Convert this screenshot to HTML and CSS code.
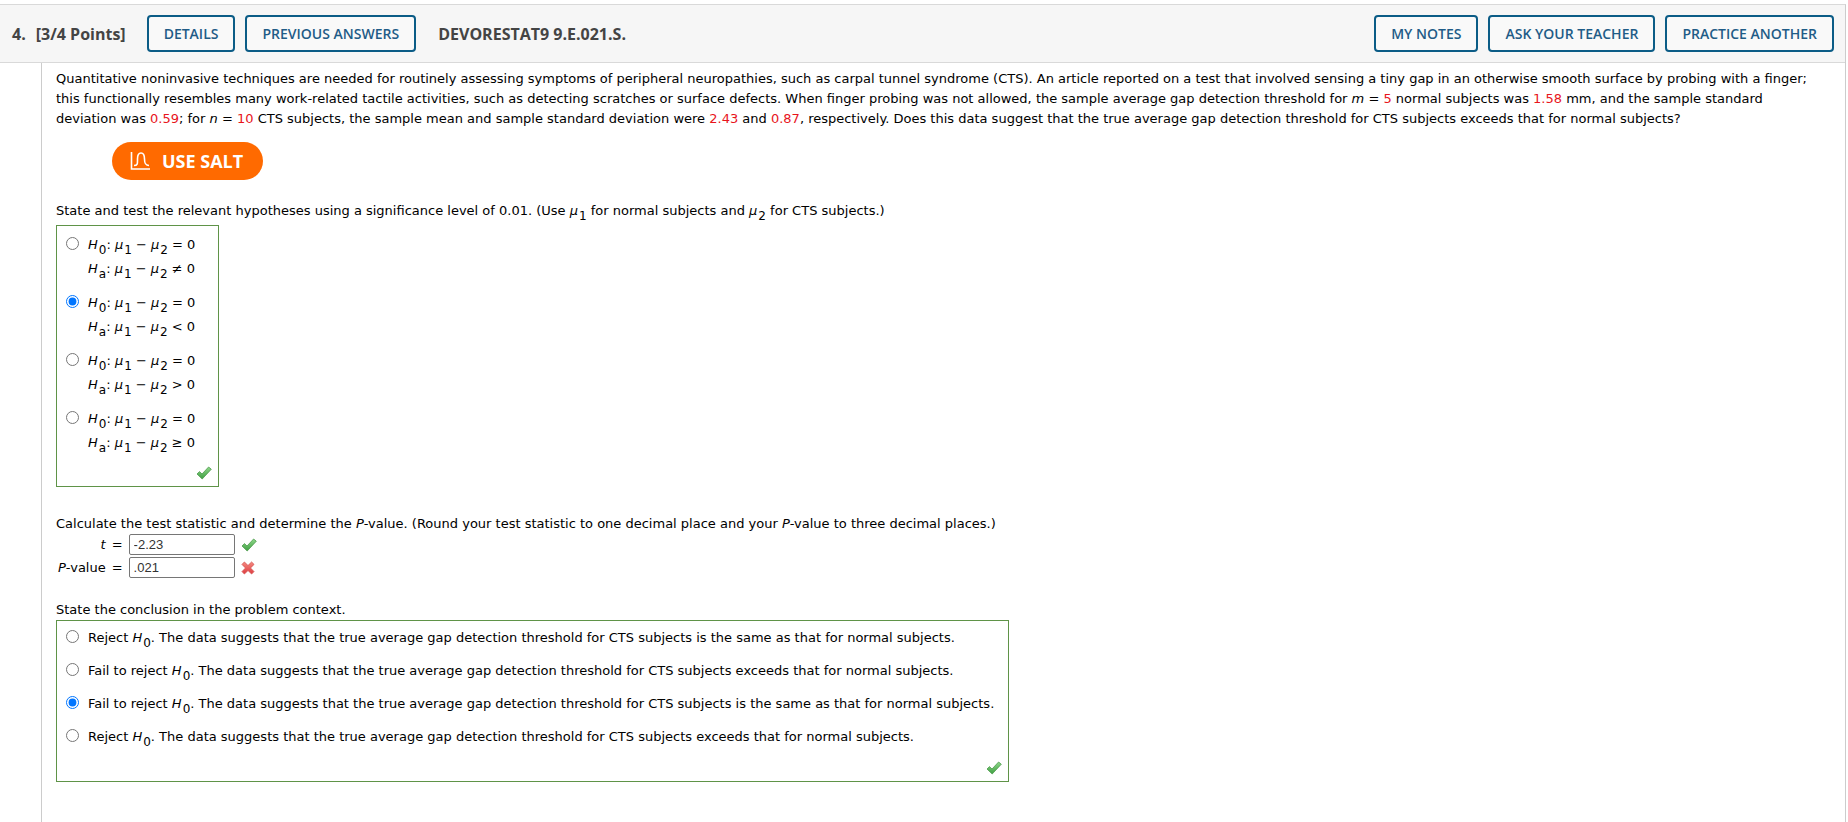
FILE: index.html
```html
<!DOCTYPE html>
<html lang="en">
<head>
  <meta charset="UTF-8">
  <meta name="viewport" content="width=device-width, initial-scale=1.0">
  <title>DEVORESTAT9 9.E.021.S.</title>
  <link rel="stylesheet" href="styles.css">
</head>
<body>
  <!-- shared icons -->
  <svg class="defs" aria-hidden="true">
    <defs>
      <linearGradient id="green" x1="0" y1="0" x2="0" y2="1">
        <stop offset="0" stop-color="#8fd88a"/>
        <stop offset="1" stop-color="#3f9f42"/>
      </linearGradient>
      <linearGradient id="red" x1="0" y1="0" x2="0" y2="1">
        <stop offset="0" stop-color="#f58a80"/>
        <stop offset="1" stop-color="#dd3b40"/>
      </linearGradient>
      <symbol id="check" viewBox="0 0 16 14">
        <path d="M1 8 L3.5 5.6 L6 8 L12.6 1 L15.3 3.2 L6.2 13 Z" fill="url(#green)" stroke="#4c9a4b" stroke-width="0.8" stroke-linejoin="round"/>
      </symbol>
      <symbol id="cross" viewBox="0 0 14 14">
        <path d="M3.4 1 L7 4.5 L10.6 1 L13 3.4 L9.5 7 L13 10.6 L10.6 13 L7 9.5 L3.4 13 L1 10.6 L4.5 7 L1 3.4 Z" fill="url(#red)" stroke="#d4504e" stroke-width="0.8" stroke-linejoin="round"/>
      </symbol>
    </defs>
  </svg>

  <div class="question">
    <header class="header">
      <span class="number">4.</span>
      <span class="points">[3/4 Points]</span>
      <button type="button" class="btn">DETAILS</button>
      <button type="button" class="btn">PREVIOUS ANSWERS</button>
      <h1>DEVORESTAT9 9.E.021.S.</h1>
      <div class="actions">
        <button type="button" class="btn">MY NOTES</button>
        <button type="button" class="btn">ASK YOUR TEACHER</button>
        <button type="button" class="btn">PRACTICE ANOTHER</button>
      </div>
    </header>

    <main class="content">
      <p>Quantitative noninvasive techniques are needed for routinely assessing symptoms of peripheral neuropathies, such as carpal tunnel syndrome (CTS). An article reported on a test that involved sensing a tiny gap in an otherwise smooth surface by probing with a finger; this functionally resembles many work-related tactile activities, such as detecting scratches or surface defects. When finger probing was not allowed, the sample average gap detection threshold for <i>m</i> = <span class="val">5</span> normal subjects was <span class="val">1.58</span> mm, and the sample standard deviation was <span class="val">0.59</span>; for <i>n</i> = <span class="val">10</span> CTS subjects, the sample mean and sample standard deviation were <span class="val">2.43</span> and <span class="val">0.87</span>, respectively. Does this data suggest that the true average gap detection threshold for CTS subjects exceeds that for normal subjects?</p>

      <button type="button" class="salt">
        <svg width="20" height="20" viewBox="0 0 20 20" fill="none" stroke="#fff" stroke-width="1.6" aria-hidden="true">
          <path d="M1.5 1 V18 H20"/>
          <path d="M4 14.5 C8 14.5 7.5 12 7.5 8 C7.5 4 8.5 2 11 2 S14.5 4 14.5 8 C14.5 12 15 14.5 19 14.5"/>
        </svg>
        USE SALT
      </button>

      <p>State and test the relevant hypotheses using a significance level of 0.01. (Use <i>μ</i><sub>1</sub> for normal subjects and <i>μ</i><sub>2</sub> for CTS subjects.)</p>
      <div class="choices hypotheses">
        <label class="choice">
          <input type="radio" name="hyp">
          <span><i>H</i><sub>0</sub>: <i>μ</i><sub>1</sub> − <i>μ</i><sub>2</sub> = 0<br><i>H</i><sub>a</sub>: <i>μ</i><sub>1</sub> − <i>μ</i><sub>2</sub> ≠ 0</span>
        </label>
        <label class="choice">
          <input type="radio" name="hyp" checked>
          <span><i>H</i><sub>0</sub>: <i>μ</i><sub>1</sub> − <i>μ</i><sub>2</sub> = 0<br><i>H</i><sub>a</sub>: <i>μ</i><sub>1</sub> − <i>μ</i><sub>2</sub> &lt; 0</span>
        </label>
        <label class="choice">
          <input type="radio" name="hyp">
          <span><i>H</i><sub>0</sub>: <i>μ</i><sub>1</sub> − <i>μ</i><sub>2</sub> = 0<br><i>H</i><sub>a</sub>: <i>μ</i><sub>1</sub> − <i>μ</i><sub>2</sub> &gt; 0</span>
        </label>
        <label class="choice">
          <input type="radio" name="hyp">
          <span><i>H</i><sub>0</sub>: <i>μ</i><sub>1</sub> − <i>μ</i><sub>2</sub> = 0<br><i>H</i><sub>a</sub>: <i>μ</i><sub>1</sub> − <i>μ</i><sub>2</sub> ≥ 0</span>
        </label>
        <svg class="mark" width="16" height="14" role="img" aria-label="Correct"><use href="#check"/></svg>
      </div>

      <p>Calculate the test statistic and determine the <i>P</i>-value. (Round your test statistic to one decimal place and your <i>P</i>-value to three decimal places.)</p>
      <div class="answers">
        <label for="t"><i>t</i></label>
        <span>=</span>
        <input type="text" id="t" value="-2.23">
        <svg width="16" height="14" role="img" aria-label="Correct"><use href="#check"/></svg>
        <label for="p"><i>P</i>-value</label>
        <span>=</span>
        <input type="text" id="p" value=".021">
        <svg width="14" height="14" role="img" aria-label="Incorrect"><use href="#cross"/></svg>
      </div>

      <p>State the conclusion in the problem context.</p>
      <div class="choices conclusion">
        <label class="choice">
          <input type="radio" name="conc">
          <span>Reject <i>H</i><sub>0</sub>. The data suggests that the true average gap detection threshold for CTS subjects is the same as that for normal subjects.</span>
        </label>
        <label class="choice">
          <input type="radio" name="conc">
          <span>Fail to reject <i>H</i><sub>0</sub>. The data suggests that the true average gap detection threshold for CTS subjects exceeds that for normal subjects.</span>
        </label>
        <label class="choice">
          <input type="radio" name="conc" checked>
          <span>Fail to reject <i>H</i><sub>0</sub>. The data suggests that the true average gap detection threshold for CTS subjects is the same as that for normal subjects.</span>
        </label>
        <label class="choice">
          <input type="radio" name="conc">
          <span>Reject <i>H</i><sub>0</sub>. The data suggests that the true average gap detection threshold for CTS subjects exceeds that for normal subjects.</span>
        </label>
        <svg class="mark" width="16" height="14" role="img" aria-label="Correct"><use href="#check"/></svg>
      </div>
    </main>
  </div>
</body>
</html>
```
FILE: styles.css
```css
* {
  margin: 0;
  padding: 0;
  box-sizing: border-box;
}

body {
  display: flex;
  flex-direction: column;
  min-height: 100vh;
  padding: 4px 2px 0 0;
  background: #fff;
  color: #000;
  font-family: Verdana, "DejaVu Sans", sans-serif;
  font-size: 13px;
  line-height: 20px;
}

.defs {
  width: 0;
  height: 0;
  flex: none;
}

.question {
  flex: 1;
  display: flex;
  flex-direction: column;
  border-top: 1px solid #d9d9d9;
  border-right: 1px solid #ccc;
}

.header {
  display: flex;
  align-items: center;
  padding: 10px 11px 10px 12px;
  background: #f6f6f6;
  border-bottom: 1px solid #d9d9d9;
  color: #444;
  font-family: "Open Sans", sans-serif;
  font-size: 16px;
  font-weight: 700;
}

.header .number {
  margin-right: 10px;
}

.header .points {
  margin-right: 21px;
}

.header h1 {
  margin-left: 12px;
  font-size: 16px;
  font-weight: 700;
}

.actions {
  display: flex;
  margin-left: auto;
  gap: 10px;
}

.btn {
  height: 37px;
  padding: 0 15px;
  background: #f9f9f9;
  border: 2px solid #0b5c86;
  border-radius: 4px;
  color: #1f5c87;
  font-family: "Open Sans", sans-serif;
  font-size: 14px;
  font-weight: 600;
}

.header > .btn {
  margin-right: 10px;
}

.content {
  flex: 1;
  margin-left: 41px;
  padding: 6px 28px 32px 14px;
  border-left: 1px solid #ccc;
}

.val {
  color: #e8141c;
}

sub {
  margin-left: 1px;
  font-size: 12px;
  line-height: 0;
  vertical-align: -5px;
}

.salt {
  display: flex;
  align-items: center;
  gap: 12px;
  height: 38px;
  margin: 13px 0 21px 56px;
  padding: 0 20px 0 18px;
  background: #ff6a00;
  border: none;
  border-radius: 19px;
  color: #fff;
  font-family: "Open Sans", sans-serif;
  font-size: 18px;
  font-weight: 700;
}

.choices {
  width: fit-content;
  padding: 6px;
  border: 1px solid #5f9348;
}

.choice {
  display: flex;
  align-items: flex-start;
  gap: 9px;
}

.choice input {
  flex: none;
  width: 13px;
  height: 13px;
  margin: 4px 0 0 3px;
}

.mark {
  display: block;
  margin-left: auto;
}

.hypotheses {
  margin: 4px 0 27px;
  padding: 6px 6px 6px;
}

.hypotheses .choice {
  padding: 1px 17px 9px 0;
  line-height: 24px;
}

.hypotheses .mark {
  margin-top: 2px;
}

.answers {
  display: grid;
  grid-template-columns: auto auto 106px auto;
  justify-content: start;
  align-items: center;
  gap: 2px 6px;
  margin-bottom: 22px;
  padding-left: 2px;
}

.answers label {
  text-align: right;
}

.answers input {
  height: 21px;
  padding: 0 4px;
  border: 1px solid #767676;
  border-radius: 2px;
  color: #333;
  font-family: "Liberation Sans", sans-serif;
  font-size: 13px;
}

.conclusion .choice {
  padding: 1px 8px 12px 0;
}

.conclusion .choice input {
  margin-top: 2px;
}

.conclusion .mark {
  margin-top: 2px;
}
```
